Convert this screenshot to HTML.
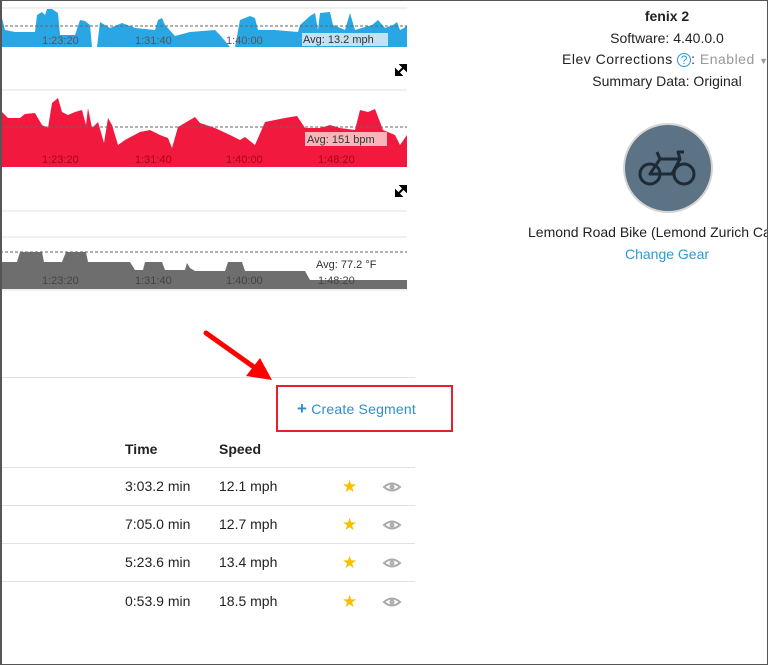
<!DOCTYPE html>
<html><head><meta charset="utf-8"><style>
*{margin:0;padding:0;box-sizing:border-box}
body{width:768px;height:665px;background:#fff;position:relative;overflow:hidden;font-family:"Liberation Sans",sans-serif;color:#222;font-size:14px}
.frame{position:absolute;left:0;top:0;width:768px;height:665px;border:1px solid #555;border-left-width:2px;pointer-events:none}
.t{position:absolute;white-space:nowrap}
.c{position:absolute;left:544px;width:246px;text-align:center;white-space:nowrap}
.hl{position:absolute;left:0;height:1px;background:#e2e2e2}
</style></head><body>
<svg width="410" height="300" style="position:absolute;left:0;top:0" font-family="Liberation Sans" font-size="11">
<polygon fill="#29a6e4" points="0,10 5,30 15,32 35,32 37,15 42,12 45,15 47,9 52,9 58,13 60,35 75,35 80,20 85,21 90,25 92,47 97,47 100,22 110,28 122,23 135,28 155,30 158,20 162,18 165,25 175,36 190,32 215,30 220,35 230,47 235,47 240,20 250,16 255,18 258,30 275,30 298,32 300,25 310,16 315,13 318,30 320,13 330,12 333,25 345,30 350,13 355,30 372,25 378,20 385,28 393,25 397,22 400,30 404,28 407,25 407,47 0,47"/>
<line x1="0" y1="26" x2="407" y2="26" stroke="#666" stroke-dasharray="3,2"/>
<line x1="0" y1="8" x2="407" y2="8" stroke="#e2e2e2"/>
<text x="42" y="44" fill="#555">1:23:20</text><text x="135" y="44" fill="#555">1:31:40</text><text x="226" y="44" fill="#555">1:40:00</text>
<rect x="302" y="33" width="86" height="13" fill="#dcecf2" opacity=".85"/><text x="303" y="43" fill="#333">Avg: 13.2 mph</text>
<line x1="0" y1="90" x2="407" y2="90" stroke="#e2e2e2"/>
<polygon fill="#f2193f" points="0,110 8,118 20,118 25,114 35,113 42,125 48,128 52,103 58,98 62,112 68,115 75,112 82,110 86,125 88,108 92,128 98,122 104,143 108,118 112,125 118,145 125,140 140,132 150,130 160,135 168,138 172,148 178,127 195,117 200,123 215,128 230,135 240,140 245,137 255,145 265,122 285,118 297,116 305,128 320,128 330,125 340,128 355,130 360,110 368,112 375,109 380,122 383,130 395,135 400,145 407,135 407,167 0,167"/>
<line x1="0" y1="127" x2="407" y2="127" stroke="#666" stroke-dasharray="3,2"/>
<rect x="305" y="132" width="82" height="14" fill="#f8c8c8" opacity=".9"/><text x="307" y="143" fill="#333">Avg: 151 bpm</text>
<text x="42" y="163" fill="#a01">1:23:20</text><text x="135" y="163" fill="#a01">1:31:40</text><text x="226" y="163" fill="#a01">1:40:00</text><text x="318" y="163" fill="#a01">1:48:20</text>
<line x1="0" y1="211" x2="407" y2="211" stroke="#e2e2e2"/>
<line x1="0" y1="237" x2="407" y2="237" stroke="#e2e2e2"/>
<polygon fill="#6e6e6e" points="0,262 17,262 20,252 42,252 44,262 62,262 66,252 86,252 88,262 130,262 135,270 143,270 145,262 162,262 165,270 185,270 187,263 190,268 195,271 225,271 228,262 242,262 245,271 305,271 310,280 407,280 407,289 0,289"/>
<line x1="0" y1="252" x2="407" y2="252" stroke="#666" stroke-dasharray="3,2"/>
<rect x="314" y="256" width="74" height="14" fill="#fff" opacity=".85"/><text x="316" y="268" fill="#333">Avg: 77.2 °F</text>
<text x="42" y="284" fill="#444">1:23:20</text><text x="135" y="284" fill="#444">1:31:40</text><text x="226" y="284" fill="#444">1:40:00</text><text x="318" y="284" fill="#444">1:48:20</text>
<line x1="0" y1="290" x2="407" y2="290" stroke="#e2e2e2"/>
<g stroke="#000" stroke-width="2" fill="#000"><line x1="396" y1="75" x2="406" y2="65"/><polygon points="396,75 396,70 401,75"/><polygon points="406,65 401,65 406,70"/>
<line x1="396" y1="196" x2="406" y2="186"/><polygon points="396,196 396,191 401,196"/><polygon points="406,186 401,186 406,191"/></g>
</svg>
<div class="hl" style="top:377px;width:415px"></div>
<div class="hl" style="top:467px;width:415px"></div>
<div class="hl" style="top:505px;width:415px"></div>
<div class="hl" style="top:543px;width:415px"></div>
<div class="hl" style="top:581px;width:415px"></div>
<svg width="80" height="60" style="position:absolute;left:200px;top:328px"><line x1="6" y1="5" x2="58" y2="42" stroke="#f00" stroke-width="5" stroke-linecap="round"/><polygon fill="#f00" points="72,52 46,48 60,30"/></svg>
<div style="position:absolute;left:276px;top:385px;width:177px;height:47px;border:2px solid #e8202a"></div>
<div class="t" style="left:297px;top:401px;color:#2a8fd0;font-size:14px;letter-spacing:0.2px"><b style="font-size:17px;line-height:14px">+</b> Create Segment</div>
<div class="t" style="left:125px;top:441px;font-weight:bold">Time</div>
<div class="t" style="left:219px;top:441px;font-weight:bold">Speed</div>
<div class="t" style="left:125px;top:478px">3:03.2 min</div><div class="t" style="left:219px;top:478px">12.1 mph</div>
<div class="t" style="left:125px;top:516px">7:05.0 min</div><div class="t" style="left:219px;top:516px">12.7 mph</div>
<div class="t" style="left:125px;top:554px">5:23.6 min</div><div class="t" style="left:219px;top:554px">13.4 mph</div>
<div class="t" style="left:125px;top:593px">0:53.9 min</div><div class="t" style="left:219px;top:593px">18.5 mph</div>
<div class="t" style="left:342px;top:477px;color:#f5c000;font-size:17px">★</div>
<div class="t" style="left:342px;top:515px;color:#f5c000;font-size:17px">★</div>
<div class="t" style="left:342px;top:553px;color:#f5c000;font-size:17px">★</div>
<div class="t" style="left:342px;top:592px;color:#f5c000;font-size:17px">★</div>
<svg width="20" height="130" style="position:absolute;left:382px;top:480px" fill="none" stroke="#aaa" stroke-width="2">
<g><path d="M2,7 Q10,0 18,7 Q10,14 2,7Z"/><circle cx="10" cy="7" r="1.5"/></g>
<g transform="translate(0,38)"><path d="M2,7 Q10,0 18,7 Q10,14 2,7Z"/><circle cx="10" cy="7" r="1.5"/></g>
<g transform="translate(0,76)"><path d="M2,7 Q10,0 18,7 Q10,14 2,7Z"/><circle cx="10" cy="7" r="1.5"/></g>
<g transform="translate(0,115)"><path d="M2,7 Q10,0 18,7 Q10,14 2,7Z"/><circle cx="10" cy="7" r="1.5"/></g>
</svg>
<div class="c" style="top:8px;font-weight:bold">fenix 2</div>
<div class="c" style="top:30px">Software: 4.40.0.0</div>
<div class="t" style="top:51px;left:562px;letter-spacing:0.5px">Elev Corrections <span style="color:#2a9ad6;font-size:12px;letter-spacing:0;border:1.5px solid #2a9ad6;border-radius:50%;display:inline-block;width:14px;height:14px;line-height:12px;text-align:center">?</span>: <span style="color:#999">Enabled <span style="font-size:9px">▼</span></span></div>
<div class="c" style="top:73px">Summary Data: Original</div>
<svg width="92" height="92" style="position:absolute;left:622px;top:122px"><circle cx="46" cy="46" r="44" fill="#5b7384" stroke="#d5d5d5" stroke-width="2"/>
<g fill="none" stroke="#1e2b36" stroke-width="3" stroke-linejoin="round"><circle cx="28" cy="52" r="10"/><circle cx="62" cy="52" r="10"/><path d="M28,52 L38,37 L58,37 L50,52 Z M38,37 L35,30 M58,37 L56,30 L62,30"/></g></svg>
<div class="t" style="left:528px;top:224px">Lemond Road Bike (Lemond Zurich Ca</div>
<div class="c" style="top:246px;color:#2a9ad6">Change Gear</div>
<div class="frame"></div>
</body></html>
